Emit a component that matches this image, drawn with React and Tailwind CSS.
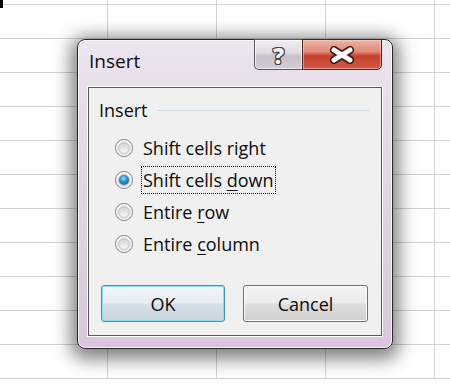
import React from "react";

const ROWS = 12;
const COLS = 5;

function Radio({ checked }) {
  return (
    <span className="relative flex h-[18px] w-[18px] shrink-0 items-center justify-center rounded-full border border-[#858585] bg-[radial-gradient(circle_at_50%_35%,#ffffff_0%,#eeeeee_45%,#cfcfcf_100%)] shadow-[inset_0_0_0_1px_#ffffff]">
      <span className="h-[12px] w-[12px] rounded-full border border-[#c2c2c2] bg-[linear-gradient(180deg,#d2d2d2_0%,#e9e9e9_60%,#f8f8f8_100%)]">
        {checked && (
          <span className="block h-full w-full rounded-full bg-[radial-gradient(circle_at_45%_35%,#8fe0ff_0%,#2a8fd0_40%,#0b4f86_100%)]" />
        )}
      </span>
    </span>
  );
}

function Option({ checked, focused, children }) {
  return (
    <div className="flex h-[32px] items-center gap-[8px]">
      <Radio checked={checked} />
      <span
        className={
          "border px-[1px] leading-[26px] " +
          (focused ? "border-dotted border-black" : "border-transparent")
        }
      >
        {children}
      </span>
    </div>
  );
}

export default function App() {
  return (
    <div
      className="relative h-[385px] w-[450px] overflow-hidden bg-white text-[#0c0c0c]"
      style={{ fontFamily: '"Open Sans", "Noto Sans", sans-serif' }}
    >
      {/* spreadsheet grid */}
      <div className="ml-[-1px] mt-[-29px] flex flex-col">
        {Array.from({ length: ROWS }).map((_, r) => (
          <div key={r} className="flex h-[34px] border-b border-[#d3d3d3]">
            {Array.from({ length: COLS }).map((_, c) => (
              <div key={c} className="h-full w-[109px] shrink-0 border-r border-[#d3d3d3]" />
            ))}
          </div>
        ))}
      </div>
      <div className="absolute left-0 top-0 h-[8px] w-[3px] bg-black" />

      {/* dialog window */}
      <div className="absolute left-[77px] top-[39px] flex h-[310px] w-[316px] flex-col rounded-[8px] border border-[#2a272b] bg-[linear-gradient(180deg,#ece4ee_0%,#e3d8e6_40%,#d9c6dc_100%)] shadow-[0_4px_18px_6px_rgba(0,0,0,0.5),inset_0_0_0_1px_rgba(255,255,255,0.7)]">
        {/* title bar */}
        <div className="flex h-[47px] shrink-0 items-start">
          <div className="ml-[11px] mt-[8px] flex-1 text-[19px] font-medium leading-[26px]">Insert</div>
          <div className="mr-[10px] mt-[-1px] flex h-[31px]">
            <div className="flex w-[48px] items-center justify-center rounded-bl-[5px] border border-r-0 border-[#5b555c] bg-[linear-gradient(180deg,#f3eef4_0%,#e2d9e3_45%,#c9bfcb_55%,#d6ccd8_100%)] shadow-[inset_0_0_0_1px_rgba(255,255,255,0.6)]">
              <span className="text-[22px] font-extrabold leading-none text-[#f4f4f4] [text-shadow:1px_0_0_#444,-1px_0_0_#444,0_1px_0_#444,0_-1px_0_#444,1px_1px_0_#444,-1px_-1px_0_#444,1px_-1px_0_#444,-1px_1px_0_#444]">
                ?
              </span>
            </div>
            <div className="flex w-[80px] items-center justify-center rounded-br-[5px] border border-[#4a2420] bg-[linear-gradient(180deg,#eeb4a6_0%,#e08a78_40%,#c8402e_55%,#d25a44_100%)] shadow-[inset_0_0_0_1px_rgba(255,220,210,0.5)]">
              <svg width="26" height="18" viewBox="0 0 26 18">
                <path d="M5 4 L21 14 M21 4 L5 14" stroke="#3a1a16" strokeWidth="8" strokeLinecap="round" />
                <path d="M5 4 L21 14 M21 4 L5 14" stroke="#ffffff" strokeWidth="5" strokeLinecap="round" />
              </svg>
            </div>
          </div>
        </div>

        {/* client area */}
        <div className="mx-[10px] mb-[12px] flex flex-1 flex-col border border-[#5a565b] bg-[#f0f0f0] text-[18px] font-medium shadow-[0_0_0_1px_#ffffff]">
          <div className="mt-[10px] flex items-center pl-[10px] pr-[11px]">
            <span className="leading-[24px]">Insert</span>
            <div className="ml-[9px] h-px flex-1 bg-[#d2dce3]" />
          </div>
          <div className="mt-[10px] flex flex-col pl-[26px]">
            <Option>Shift cells right</Option>
            <Option checked focused>
              Shift cells <span className="underline underline-offset-[3px]">d</span>own
            </Option>
            <Option>
              Entire <span className="underline underline-offset-[3px]">r</span>ow
            </Option>
            <Option>
              Entire <span className="underline underline-offset-[3px]">c</span>olumn
            </Option>
          </div>
          <div className="mt-[25px] flex gap-[18px] pl-[12px]">
            <button className="h-[37px] w-[124px] rounded-[3px] border border-[#3d94c2] bg-[linear-gradient(180deg,#f2f7fa_0%,#e6eef3_48%,#d4dfe6_52%,#c9d6de_100%)] text-[18px] font-medium leading-none text-[#0c0c0c] shadow-[inset_0_0_0_1px_#8fdcf7]">
              OK
            </button>
            <button className="h-[37px] w-[125px] rounded-[3px] border border-[#707070] bg-[linear-gradient(180deg,#f4f4f4_0%,#ebebeb_48%,#dddddd_52%,#d0d0d0_100%)] text-[18px] font-medium leading-none text-[#0c0c0c] shadow-[inset_0_0_0_1px_#fbfbfb]">
              Cancel
            </button>
          </div>
        </div>
      </div>
    </div>
  );
}
